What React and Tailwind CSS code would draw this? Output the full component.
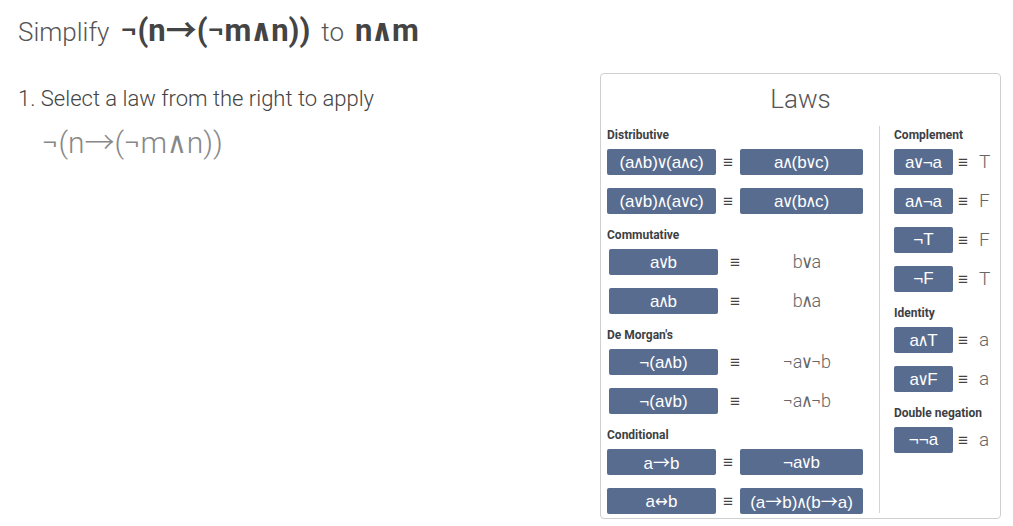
import React from "react";

const roboto = { fontFamily: "Roboto, 'Liberation Sans', sans-serif" };

const symFont = {
  "∧": "'DejaVu Sans Condensed', 'DejaVu Sans', sans-serif",
  "∨": "'DejaVu Sans Condensed', 'DejaVu Sans', sans-serif",
  "→": "'Noto Sans CJK SC', 'DejaVu Sans', sans-serif",
  "↔": "'DejaVu Sans Condensed', 'DejaVu Sans', sans-serif",
};

function Sym({ text, tight }) {
  const parts = [];
  let buf = "";
  [...text].forEach((ch, i) => {
    if (symFont[ch]) {
      if (buf) parts.push(buf);
      buf = "";
      const narrow = tight && (ch === "∧" || ch === "∨");
      parts.push(
        <span key={i} className={narrow ? "mx-[-1.5px]" : ""} style={{ fontFamily: symFont[ch] }}>
          {ch}
        </span>
      );
    } else buf += ch;
  });
  if (buf) parts.push(buf);
  return <>{parts}</>;
}

function Btn({ children, w }) {
  return (
    <div
      className={`h-[26px] ${w} shrink-0 rounded-[2px] bg-[#586c8f] text-white text-[17px] leading-[26px] text-center whitespace-nowrap`}
      style={{ fontFamily: "'Liberation Sans', Arial, 'DejaVu Sans', sans-serif" }}
    >
      <Sym text={children} tight />
    </div>
  );
}

function Eq({ w }) {
  return (
    <div className={`${w} shrink-0 text-center text-[17px] leading-[26px] text-[#444]`}>≡</div>
  );
}

function Heading({ children }) {
  return (
    <div className="h-[16px] text-[12px] leading-[16px] font-bold text-[#3d3f44]">{children}</div>
  );
}

function TwoBtnRow({ a, b }) {
  return (
    <div className="flex items-center">
      <Btn w="w-[109px]">{a}</Btn>
      <Eq w="w-[24px]" />
      <Btn w="w-[123px]">{b}</Btn>
    </div>
  );
}

function TextRow({ a, b }) {
  return (
    <div className="flex items-center pl-[2px]">
      <Btn w="w-[109px]">{a}</Btn>
      <Eq w="w-[34px]" />
      <div className="w-[110px] text-center text-[18px] font-light leading-[26px] text-[#666]">
        <Sym text={b} tight />
      </div>
    </div>
  );
}

function RightRow({ a, b }) {
  return (
    <div className="flex items-center">
      <Btn w="w-[59px]">{a}</Btn>
      <Eq w="w-[20px]" />
      <div className="ml-[6px] text-[19px] font-light leading-[26px] text-[#666]">{b}</div>
    </div>
  );
}

function Section({ title, children }) {
  return (
    <div className="flex flex-col">
      <Heading>{title}</Heading>
      <div className="mt-[6px] flex flex-col gap-[13px]">{children}</div>
    </div>
  );
}

export default function App() {
  return (
    <div className="w-[1013px] h-[526px] bg-white overflow-hidden" style={roboto}>
      <div className="pl-[18px] pt-[12px] h-[44px] text-[26px] leading-[32px] text-[#555] font-light whitespace-nowrap">
        Simplify
        <span className="ml-[11px] mr-[11px] font-bold text-[31px] text-[#444]">
          <Sym text="¬(n→(¬m∧n))" tight />
        </span>
        to
        <span className="ml-[11px] font-bold text-[31px] text-[#444]">
          <Sym text="n∧m" tight />
        </span>
      </div>
      <div className="mt-[29px] flex">
        <div className="w-[600px] pl-[18px] pt-[11px]">
          <div className="text-[22px] leading-[30px] font-light text-[#444]">
            1. Select a law from the right to apply
          </div>
          <div className="mt-[9px] pl-[24px] text-[30px] leading-[34px] font-light text-[#888]">
            <Sym text="¬(n→(¬m∧n))" />
          </div>
        </div>
        <div className="w-[401px] h-[446px] rounded-[4px] border border-[#cfcfcf] flex flex-col">
          <div className="pt-[9px] text-center text-[26px] leading-[32px] font-light text-[#555]">Laws</div>
          <div className="mt-[11px] flex pl-[6px]">
            <div className="w-[272px] pt-[1px] flex flex-col gap-[13px]">
              <Section title="Distributive">
                <TwoBtnRow a="(a∧b)∨(a∧c)" b="a∧(b∨c)" />
                <TwoBtnRow a="(a∨b)∧(a∨c)" b="a∨(b∧c)" />
              </Section>
              <Section title="Commutative">
                <TextRow a="a∨b" b="b∨a" />
                <TextRow a="a∧b" b="b∧a" />
              </Section>
              <Section title="De Morgan's">
                <TextRow a="¬(a∧b)" b="¬a∨¬b" />
                <TextRow a="¬(a∨b)" b="¬a∧¬b" />
              </Section>
              <Section title="Conditional">
                <TwoBtnRow a="a→b" b="¬a∨b" />
                <TwoBtnRow a="a↔b" b="(a→b)∧(b→a)" />
              </Section>
            </div>
            <div className="border-l border-[#d4d4d4] pl-[14px] pt-[1px] flex flex-col gap-[13px] h-[387px]">
              <Section title="Complement">
                <RightRow a="a∨¬a" b="T" />
                <RightRow a="a∧¬a" b="F" />
                <RightRow a="¬T" b="F" />
                <RightRow a="¬F" b="T" />
              </Section>
              <Section title="Identity">
                <RightRow a="a∧T" b="a" />
                <RightRow a="a∨F" b="a" />
              </Section>
              <Section title="Double negation">
                <RightRow a="¬¬a" b="a" />
              </Section>
            </div>
          </div>
        </div>
      </div>
    </div>
  );
}
